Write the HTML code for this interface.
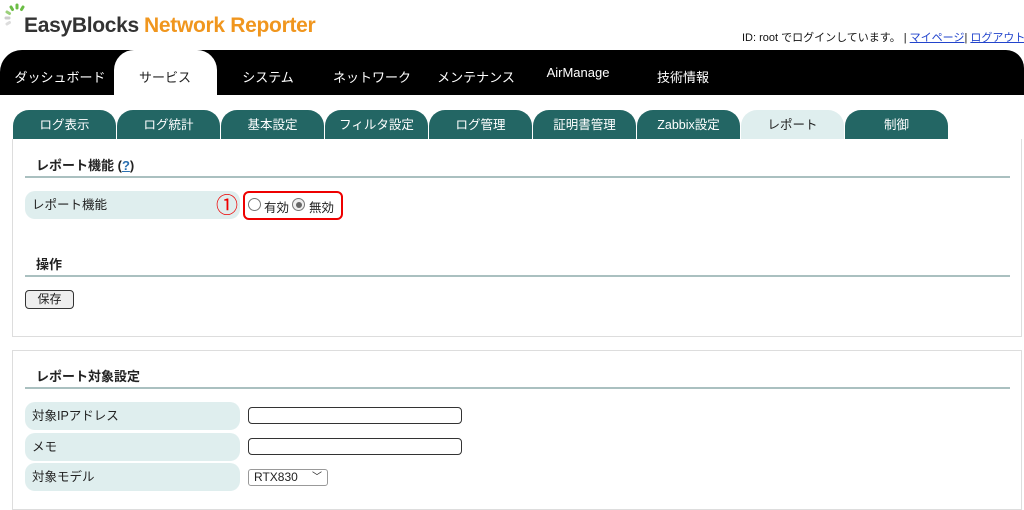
<!DOCTYPE html>
<html><head><meta charset="utf-8"><style>
*{margin:0;padding:0;box-sizing:border-box}
body{width:1024px;height:495px;overflow:hidden;background:#fff;font-family:"Liberation Sans","Noto Sans CJK JP",sans-serif;color:#222;position:relative}
.a{position:absolute}
.nav{left:0;top:50px;width:1024px;height:45px;background:#000;border-radius:22px 18px 0 0}
.ni{color:#fff;font-size:13px;top:68px;transform:translateX(-50%);white-space:nowrap}
.act{left:114px;top:50px;width:103px;height:46px;background:#fff;border-radius:20px 20px 0 0}
.st{top:110px;height:30px;width:103px;background:#236664;color:#fff;font-size:12.5px;text-align:center;line-height:30px;border-radius:16px 16px 0 0}
.panel{border:1px solid #ddd;left:12px;width:1010px;background:#fff}
.h{font-weight:bold;font-size:13px;left:36px}
.ln{left:25px;width:985px;height:2px;background:#aac0c0}
.lab{left:25px;width:215px;height:28px;background:#dfeeee;border-radius:10px;font-size:12.5px;line-height:28px;padding-left:7px}
.inp{left:248px;width:214px;height:17px;border:1.5px solid #333;border-radius:4px;background:#fff}
</style></head><body>
<svg class="a" style="left:4px;top:2px" width="26" height="26" viewBox="0 0 26 26">
<g stroke-linecap="round" stroke-width="3">
<line x1="13" y1="3" x2="13" y2="6" stroke="#6bbd45"/>
<line x1="19" y1="5" x2="17.5" y2="7.5" stroke="#6bbd45"/>
<line x1="7" y1="5" x2="8.5" y2="7.5" stroke="#6bbd45"/>
<line x1="3" y1="10" x2="5.5" y2="11.5" stroke="#9bd07a"/>
<line x1="2" y1="16" x2="5" y2="16" stroke="#ccc"/>
<line x1="3" y1="22" x2="5.5" y2="20.5" stroke="#ddd"/>
</g></svg>
<div class="a" style="left:24px;top:14px;font-size:21px;font-weight:bold;color:#333;letter-spacing:-0.3px">EasyBlocks</div>
<div class="a" style="left:144px;top:14px;font-size:21px;font-weight:bold;color:#f0961e;letter-spacing:-0.3px">Network Reporter</div>
<div class="a" style="left:742px;top:29px;font-size:11px;color:#111;white-space:nowrap">ID: root でログインしています。 | <span style="color:#2244cc;text-decoration:underline">マイページ</span>| <span style="color:#2244cc;text-decoration:underline">ログアウト</span></div>
<div class="a nav"></div>
<div class="a act"></div>
<div class="a ni" style="left:60px;top:67px">ダッシュボード</div>
<div class="a ni" style="left:165px;color:#222;top:67px">サービス</div>
<div class="a ni" style="left:268px;top:67px">システム</div>
<div class="a ni" style="left:372px;top:67px">ネットワーク</div>
<div class="a ni" style="left:476px;top:67px">メンテナンス</div>
<div class="a ni" style="left:578px;top:65px">AirManage</div>
<div class="a ni" style="left:683px;top:67px">技術情報</div>
<div class="a st" style="left:13px">ログ表示</div>
<div class="a st" style="left:117px">ログ統計</div>
<div class="a st" style="left:221px">基本設定</div>
<div class="a st" style="left:325px">フィルタ設定</div>
<div class="a st" style="left:429px">ログ管理</div>
<div class="a st" style="left:533px">証明書管理</div>
<div class="a st" style="left:637px">Zabbix設定</div>
<div class="a st" style="left:741px;background:#dfeeee;color:#222">レポート</div>
<div class="a st" style="left:845px">制御</div>
<div class="a panel" style="top:139px;height:198px;border-top:none"></div>
<div class="a h" style="top:155px">レポート機能 (<span style="color:#2a6fb0;text-decoration:underline">?</span>)</div>
<div class="a ln" style="top:176px"></div>
<div class="a lab" style="top:191px">レポート機能</div>
<div class="a" style="left:216px;top:188px;font-size:22px;color:#e00">①</div>
<div class="a" style="left:243px;top:191px;width:100px;height:29px;border:2px solid #e00;border-radius:6px"></div>
<div class="a" style="left:248px;top:198px;width:13px;height:13px;border:1px solid #777;border-radius:50%;background:#fff"></div>
<div class="a" style="left:264px;top:197px;font-size:12.5px">有効</div>
<div class="a" style="left:292px;top:198px;width:13px;height:13px;border:1px solid #777;border-radius:50%;background:#eee"><div style="margin:2.5px;width:6px;height:6px;border-radius:50%;background:#666"></div></div>
<div class="a" style="left:309px;top:197px;font-size:12.5px">無効</div>
<div class="a h" style="top:254px">操作</div>
<div class="a ln" style="top:275px"></div>
<div class="a" style="left:25px;top:290px;width:49px;height:19px;border:1.5px solid #333;border-radius:4px;background:#eee;font-size:12px;text-align:center;line-height:16px">保存</div>
<div class="a panel" style="top:350px;height:160px"></div>
<div class="a h" style="top:366px">レポート対象設定</div>
<div class="a ln" style="top:387px"></div>
<div class="a lab" style="top:402px">対象IPアドレス</div>
<div class="a lab" style="top:433px">メモ</div>
<div class="a lab" style="top:463px">対象モデル</div>
<div class="a inp" style="top:407px"></div>
<div class="a inp" style="top:438px"></div>
<div class="a" style="left:248px;top:469px;width:80px;height:17px;border:1px solid #999;border-radius:3px;font-size:12px;line-height:15px;padding-left:5px">RTX830<span style="position:absolute;right:5px;top:0;font-size:10px">﹀</span></div>
</body></html>
